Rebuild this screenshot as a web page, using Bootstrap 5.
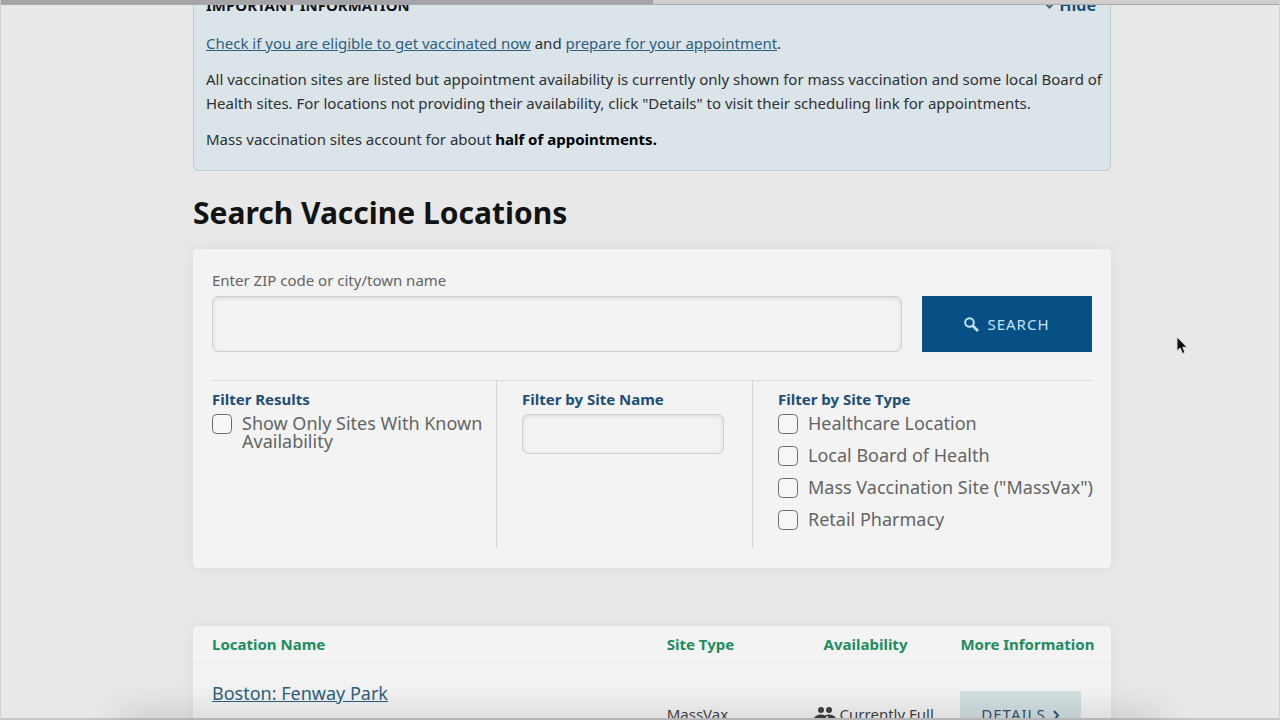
<!DOCTYPE html>
<html lang="en">
<head>
<meta charset="utf-8">
<meta name="viewport" content="width=device-width, initial-scale=1">
<title>Search Vaccine Locations</title>
<link href="https://cdn.jsdelivr.net/npm/bootstrap@5.3.0/dist/css/bootstrap.min.css" rel="stylesheet">
<style>
  body { background: #e8e8e8; color: #2b3134; font-family: "Noto Sans", sans-serif; font-size: 15px; line-height: 24px; }
  a { color: #2d607f; }
  .frame { border: solid #d0d1d2; border-width: 0 1px; }
  .tab-strip { height: 5px; background: #cfcdce; border-bottom: 1px solid #aaa; }
  .tab-strip div { width: 51%; background: #a5a5a7; }
  .page-area { padding-left: 24px; }
  .page-column { max-width: 918px; margin-top: -13px; }
  .notice { background: #dbe4e8; border: 1px solid #bccfd4; border-radius: 6px; padding: 0 6px 19px 12px; }
  .notice p { margin-bottom: 12px; }
  .notice-head { margin-bottom: 14px; padding-right: 8px; color: #101618; }
  .hide-toggle { color: #14507c; font-size: 16px; line-height: 24px; }
  h1 { font-size: 30px; line-height: 40px; color: #111314; margin: 22px 0 16px; }
  .panel { background: #f3f3f3; border-radius: 5px; box-shadow: 0 0 14px rgba(0, 0, 0, .06); }
  .search-panel { padding: 19px 19px 20px; color: #646464; }
  .field { background: #f3f3f3; border: 1px solid #cfcfcf; border-radius: 6px; box-shadow: inset 0 1px 4px rgba(0, 0, 0, .12); }
  .field-zip { height: 56px; }
  .field-site { height: 40px; }
  .search-btn { width: 170px; height: 56px; background: #065086; color: #c4e6fb; letter-spacing: 1px; font-size: 15px; }
  .filters { display: grid; grid-template-columns: 284fr 256fr 340fr; border-top: 1px solid #d9d9d9; margin-top: 28px; }
  .filters fieldset { padding: 6px 0 6px 25px; }
  .filters fieldset:first-child { padding-left: 0; }
  .filters fieldset + fieldset { border-left: 1px solid #d6d6d6; }
  .filters legend { font-size: 15px; line-height: 24px; color: #1d4f77; margin-bottom: 3px; }
  .option { gap: 10px; font-size: 18px; line-height: 18px; margin-bottom: 12px; }
  .option input { width: 20px; height: 20px; background: #f6f6f6; border: 1px solid #6c6c6c; border-radius: 4px; margin: 0; }
  .results { margin-top: 58px; }
  .results table { --bs-table-bg: transparent; table-layout: fixed; color: #3f4447; }
  .results th { color: #218c5e; padding: 7px 0; line-height: 22px; border-bottom: 1px solid #ebebeb; }
  .results th.availability { padding-left: 10px; }
  .results td { height: 102px; padding: 0; }
  .results th:first-child, .results td:first-child { padding-left: 19px; }
  .results .site-cell { padding-top: 18px; font-size: 18px; }
  .details-btn { width: 121px; height: 46px; background: #d3dfe1; color: #305472; letter-spacing: 1px; font-size: 15px; }
  .window-foot { height: 2px; background: #c6c6c6; }
  .foot-shadow { left: 10%; right: 10%; bottom: -16px; height: 16px; box-shadow: 0 0 34px 8px rgba(0, 0, 0, .14); }
  .pointer { left: 1175px; top: 336px; }
</style>
</head>
<body>
<div class="frame vh-100 d-flex flex-column overflow-hidden position-relative">
  <div class="tab-strip d-flex flex-shrink-0"><div></div></div>
  <div class="page-area flex-grow-1 overflow-hidden">
    <main class="page-column mx-auto">
      <section class="notice">
        <div class="notice-head d-flex justify-content-between">
          <strong>IMPORTANT INFORMATION</strong>
          <button type="button" class="hide-toggle btn p-0 border-0 fw-bold d-flex align-items-center gap-1">
            <svg width="11" height="11" viewBox="0 0 11 11" fill="none" stroke="#4a6478" stroke-width="2" aria-hidden="true"><path d="M1.500 3.500 5.500 7.500l4-4"/></svg>
            Hide
          </button>
        </div>
        <p><a href="#eligible">Check if you are eligible to get vaccinated now</a> and <a href="#prepare">prepare for your appointment</a>.</p>
        <p>All vaccination sites are listed but appointment availability is currently only shown for mass vaccination and some local Board of Health sites. For locations not providing their availability, click "Details" to visit their scheduling link for appointments.</p>
        <p class="mb-0">Mass vaccination sites account for about <strong class="text-black">half of appointments.</strong></p>
      </section>

      <h1 class="fw-bold">Search Vaccine Locations</h1>

      <form class="panel search-panel">
        <label for="zip" class="d-block mb-1">Enter ZIP code or city/town name</label>
        <div class="d-flex">
          <input id="zip" type="text" class="field field-zip form-control me-3">
          <button type="button" class="search-btn btn border-0 rounded-0 flex-shrink-0 d-flex align-items-center justify-content-center gap-2 ms-1 p-0">
            <svg width="15" height="15" viewBox="0 0 15 15" fill="none" stroke="currentColor" aria-hidden="true"><circle cx="5.500" cy="5.500" r="4.300" stroke-width="2"/><path d="M9 9l5 5" stroke-width="2.600"/></svg>
            SEARCH
          </button>
        </div>
        <div class="filters">
          <fieldset>
            <legend class="fw-bold">Filter Results</legend>
            <div class="option d-flex"><input class="form-check-input flex-shrink-0" type="checkbox" id="known"><label for="known">Show Only Sites With Known Availability</label></div>
          </fieldset>
          <fieldset>
            <legend class="fw-bold"><label for="site">Filter by Site Name</label></legend>
            <div class="pe-4 me-1"><input id="site" type="text" class="field field-site form-control"></div>
          </fieldset>
          <fieldset>
            <legend class="fw-bold">Filter by Site Type</legend>
            <div class="option d-flex"><input class="form-check-input flex-shrink-0" type="checkbox" id="health"><label for="health">Healthcare Location</label></div>
            <div class="option d-flex"><input class="form-check-input flex-shrink-0" type="checkbox" id="board"><label for="board">Local Board of Health</label></div>
            <div class="option d-flex"><input class="form-check-input flex-shrink-0" type="checkbox" id="mass"><label for="mass" class="text-nowrap">Mass Vaccination Site ("MassVax")</label></div>
            <div class="option d-flex"><input class="form-check-input flex-shrink-0" type="checkbox" id="retail"><label for="retail">Retail Pharmacy</label></div>
          </fieldset>
        </div>
      </form>

      <section class="results panel">
        <table class="table table-borderless mb-0">
          <colgroup><col><col style="width:16%"><col style="width:16%"><col style="width:16.400%"></colgroup>
          <thead><tr><th scope="col">Location Name</th><th scope="col">Site Type</th><th scope="col" class="availability">Availability</th><th scope="col" class="text-nowrap">More Information</th></tr></thead>
          <tbody><tr>
            <td class="site-cell align-top"><a href="#fenway">Boston: Fenway Park</a></td>
            <td class="align-middle">MassVax</td>
            <td class="align-middle"><span class="d-flex align-items-center gap-1"><svg width="22" height="16" viewBox="0 0 22 16" fill="#3c4043" aria-hidden="true"><circle cx="7" cy="4" r="3"/><circle cx="15" cy="4" r="3"/><path d="M0 16v-3c0-2.700 4-4.500 7-4.500 1.500 0 2.800.3 4 .9 1.200-.6 2.500-.9 4-.9 3 0 7 1.800 7 4.500v3h-7.500v-3c0-1.300-.6-2.400-1.500-3.200-.8.800-1 1.900-1 3.200v3z"/></svg>Currently Full</span></td>
            <td class="align-middle"><button type="button" class="details-btn btn rounded-0 p-0 border-0">DETAILS <svg width="10" height="11" viewBox="0 0 10 11" fill="none" stroke="currentColor" stroke-width="2" aria-hidden="true"><path d="M3 1l4 4.500L3 10"/></svg></button></td>
          </tr></tbody>
        </table>
      </section>
    </main>
  </div>
  <div class="foot-shadow position-absolute"></div>
  <div class="window-foot flex-shrink-0"></div>
  <svg class="pointer position-absolute" width="12" height="19" viewBox="0 0 12 19" aria-hidden="true"><path d="M1 1v14l3.200-3 2.200 5.500 2.500-1-2.200-5.300H11z" fill="#0b0b0b" stroke="#d8d8d8" stroke-width="1"/></svg>
</div>
<script src="https://cdn.jsdelivr.net/npm/bootstrap@5.3.0/dist/js/bootstrap.bundle.min.js"></script>
</body>
</html>
